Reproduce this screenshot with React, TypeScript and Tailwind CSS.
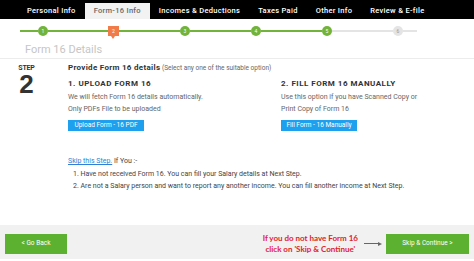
import { Fragment } from "react";

const tabs = [
  "Personal Info",
  "Form-16 Info",
  "Incomes & Deductions",
  "Taxes Paid",
  "Other Info",
  "Review & E-file",
];

const Dot = ({ n, done }: { n: number; done: boolean }) => (
  <div
    className={`w-[10px] h-[10px] rounded-full flex items-center justify-center text-[5px] leading-none ${
      done ? "bg-[#72b33b] text-white" : "bg-[#e4e4e4] text-[#999]"
    }`}
  >
    {n}
  </div>
);

const App = () => {
  return (
    <div className="w-[474px] h-[261px] bg-white overflow-hidden font-['Roboto',sans-serif] flex flex-col">
      {/* tabs */}
      <div className="h-[19px] bg-black flex items-end pl-[18px] shrink-0">
        {tabs.map((t) => (
          <div
            key={t}
            className={`h-[16px] px-[9px] flex items-center text-[7.5px] font-medium tracking-[0.3px] ${
              t === "Form-16 Info"
                ? "bg-[#f2f2f2] text-[#666]"
                : "text-white"
            }`}
          >
            {t}
          </div>
        ))}
      </div>

      {/* steps */}
      <div className="h-[24px] flex items-center pl-[20px] shrink-0">
        <div className="h-[2px] w-[18px] bg-[#72b33b]" />
        {[1, 2, 3, 4, 5, 6].map((n, i) => (
          <Fragment key={n}>
            {n === 2 ? (
              <div className="relative w-[11px] h-[10px] bg-[#f27c49] text-white text-[5px] flex items-center justify-center leading-none">
                2
                <div className="absolute top-[10px] left-[3px] w-0 h-0 border-l-[2.5px] border-r-[2.5px] border-t-[3px] border-l-transparent border-r-transparent border-t-[#f27c49]" />
              </div>
            ) : (
              <Dot n={n} done={n < 6} />
            )}
            {i < 5 ? (
              <div
                className={`h-[2px] ${n === 1 ? "w-[60px]" : "w-[61px]"} ${
                  n < 5 ? "bg-[#72b33b]" : "bg-[#e4e4e4]"
                }`}
              />
            ) : (
              <div className="h-[2px] w-[14px] bg-[#e4e4e4]" />
            )}
          </Fragment>
        ))}
      </div>

      <div className="pl-[25px] h-[14px] flex items-center text-[11px] text-[#c6c6c6] shrink-0">
        Form 16 Details
      </div>
      <div className="mt-[1px] border-b border-[#ececec] shrink-0" />

      {/* content */}
      <div className="flex pt-[3px] h-[166px] shrink-0">
        <div className="w-[68px] pl-[17px] flex flex-col items-start">
          <div className="w-[19px] flex flex-col items-center text-[#333]">
            <span className="text-[7px] font-bold leading-[7px] mt-[3px] tracking-[-0.2px]">STEP</span>
            <span className="text-[26px] font-bold leading-[24px] font-['Liberation_Sans',sans-serif]">
              2
            </span>
          </div>
        </div>
        <div className="flex-1 text-[#666]">
          <div className="text-[6.5px] leading-[10px] mt-[1px]">
            <span className="font-bold text-[#333] text-[8px] tracking-[0.3px]">
              Provide Form 16 details
            </span>{" "}
            (Select any one of the suitable option)
          </div>
          <div className="flex mt-[6px]">
            <div className="w-[213px]">
              <div className="text-[8px] font-bold text-[#333] leading-[10px] tracking-[0.5px]">
                1. UPLOAD FORM 16
              </div>
              <div className="text-[7px] leading-[12px] mt-[2px]">
                We will fetch Form 16 details automatically.
                <br />
                Only PDFs File to be uploaded
              </div>
              <div className="mt-[5px] w-[76px] h-[11px] bg-[#1ea0ef] text-white text-[6.5px] flex items-center justify-center">
                Upload Form - 16 PDF
              </div>
            </div>
            <div>
              <div className="text-[8px] font-bold text-[#333] leading-[10px] tracking-[0.5px]">
                2. FILL FORM 16 MANUALLY
              </div>
              <div className="text-[7px] leading-[12px] mt-[2px]">
                Use this option if you have Scanned Copy or
                <br />
                Print Copy of Form 16
              </div>
              <div className="mt-[5px] w-[76px] h-[11px] bg-[#1ea0ef] text-white text-[6.5px] flex items-center justify-center">
                Fill Form - 16 Manually
              </div>
            </div>
          </div>
          <div className="text-[7px] mt-[25px] leading-[10px]">
            <span className="text-[#2f7fd6] underline">Skip this Step.</span>{" "}
            <span className="text-[#444]">If You :-</span>
          </div>
          <div className="text-[7px] text-[#444] pl-[5px] leading-[12px] mt-[2px]">
            <div>1. Have not received Form 16. You can fill your Salary details at Next Step.</div>
            <div>
              2. Are not a Salary person and want to report any another income. You can fill another
              income at Next Step.
            </div>
          </div>
        </div>
      </div>

      {/* footer */}
      <div className="h-[34px] bg-[#f1f1f1] flex items-center justify-between px-[5px] shrink-0">
        <div className="w-[62px] h-[20px] bg-[#5cb130] text-white text-[6.5px] flex items-center justify-center mt-[3px]">
          &lt; Go Back
        </div>
        <div className="flex items-center mt-[3px]">
          <div className="text-center text-[8px] font-bold text-[#e3202b] leading-[11px] font-['Lato',sans-serif]">
            If you do not have Form 16
            <br />
            click on 'Skip &amp; Continue'
          </div>
          <div className="flex items-center ml-[6px] mr-[4px]">
            <div className="w-[14px] h-[1px] bg-[#666]" />
            <div className="w-0 h-0 border-t-[2.5px] border-b-[2.5px] border-l-[4px] border-t-transparent border-b-transparent border-l-[#666]" />
          </div>
          <div className="w-[83px] h-[20px] bg-[#5cb130] text-white text-[6.5px] flex items-center justify-center">
            Skip &amp; Continue &gt;
          </div>
        </div>
      </div>
    </div>
  );
};

export default App;
